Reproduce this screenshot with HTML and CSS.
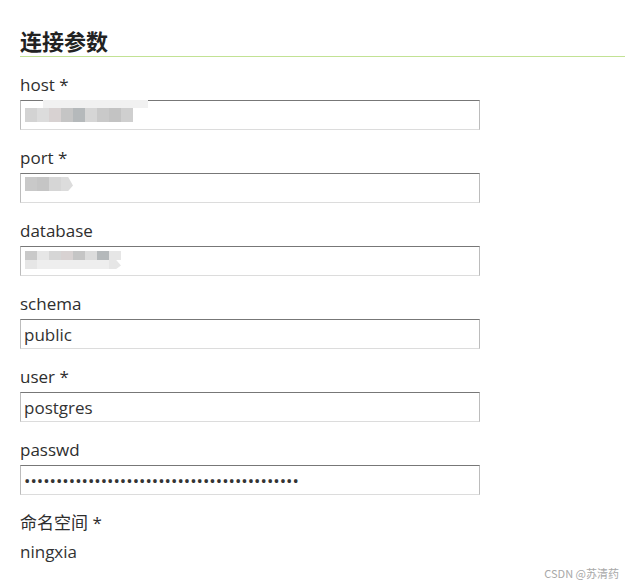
FILE: index.html
```html
<!DOCTYPE html>
<html lang="zh">
<head>
<meta charset="utf-8">
<title>连接参数</title>
<link rel="stylesheet" href="styles.css">
</head>
<body>
<div class="page">
  <h2 class="section-title">连接参数</h2>
  <form class="form">
    <div class="group">
      <label class="label">host *</label>
      <div class="field-wrap">
        <input class="input" type="text" value="">
        <div class="mosaic mosaic-host">
          <div class="mrow light"><span class="w105 c1"></span></div>
          <div class="mrow">
            <span class="c2"></span><span class="c3"></span><span class="c4"></span><span class="c5"></span><span class="c6"></span><span class="c7"></span><span class="c8"></span><span class="c9"></span><span class="c10"></span>
          </div>
        </div>
      </div>
    </div>
    <div class="group">
      <label class="label">port *</label>
      <div class="field-wrap">
        <input class="input" type="text" value="">
        <div class="mosaic mosaic-port">
          <div class="mrow">
            <span class="c8"></span><span class="c5"></span><span class="c7"></span><span class="c3 tail"></span>
          </div>
        </div>
      </div>
    </div>
    <div class="group">
      <label class="label">database</label>
      <div class="field-wrap">
        <input class="input" type="text" value="">
        <div class="mosaic mosaic-db">
          <div class="mrow">
            <span class="c8"></span><span class="c1"></span><span class="c7"></span><span class="c4"></span><span class="c5"></span><span class="c3"></span><span class="c6"></span><span class="c1"></span>
          </div>
          <div class="mrow">
            <span class="c1"></span><span class="c11"></span><span class="c11"></span><span class="c11"></span><span class="c11"></span><span class="c11"></span><span class="c11"></span><span class="c1 tail"></span>
          </div>
        </div>
      </div>
    </div>
    <div class="group">
      <label class="label">schema</label>
      <input class="input" type="text" value="public">
    </div>
    <div class="group">
      <label class="label">user *</label>
      <input class="input" type="text" value="postgres">
    </div>
    <div class="group">
      <label class="label">passwd</label>
      <input class="input" type="password" value="abcdefghijabcdefghijabcdefghijabcdefghijabc">
    </div>
    <div class="group">
      <label class="label">命名空间 *</label>
      <div class="value">ningxia</div>
    </div>
  </form>
</div>
<div class="watermark">CSDN @苏清药</div>
</body>
</html>
```

FILE: styles.css
```css
html, body {
  margin: 0;
  padding: 0;
  background: #ffffff;
}
body {
  font-family: "Open Sans", "Noto Sans CJK SC", sans-serif;
  color: #333333;
  width: 625px;
  height: 585px;
  position: relative;
  overflow: hidden;
}
.page {
  padding: 26px 0 0 20px;
}
.section-title {
  margin: 0 0 17px 0;
  font-family: "Noto Sans CJK SC", "Open Sans", sans-serif;
  font-size: 22px;
  font-weight: 700;
  line-height: 28px;
  padding-bottom: 2px;
  border-bottom: 1px solid #c2e294;
  color: #222222;
}
.form {
  display: flex;
  flex-direction: column;
  gap: 17px;
}
.group {
  display: flex;
  flex-direction: column;
  gap: 4px;
}
.label {
  font-size: 17px;
  line-height: 22px;
  height: 22px;
  color: #2e2e2e;
  font-family: "Open Sans", "Noto Sans CJK SC", sans-serif;
}
.input {
  box-sizing: border-box;
  width: 460px;
  height: 30px;
  margin: 0;
  padding: 0 3px;
  font-family: "Open Sans", sans-serif;
  font-size: 17px;
  color: #333333;
  background: #ffffff;
  border-style: solid;
  border-width: 1px;
  border-color: #777777 #bcbcbc #dcdcdc #bcbcbc;
  outline: none;
}
input[type="password"] {
  font-size: 17px;
}
.value {
  font-size: 17px;
  line-height: 22px;
  margin-top: 3px;
}
.field-wrap {
  position: relative;
  width: 460px;
  height: 30px;
}
.mosaic {
  position: absolute;
  display: flex;
  flex-direction: column;
}
.mrow {
  display: flex;
}
.mrow span {
  display: block;
  width: 12px;
  height: 13px;
}
.mosaic-host {
  left: 5px;
  top: 0;
}
.mosaic-host .mrow.light {
  padding-left: 18px;
}
.mosaic-host .mrow.light span {
  height: 8px;
  width: 105px;
  background: #f1f1f1;
}
.mosaic-host .mrow span {
  height: 14px;
}
.mosaic-port {
  left: 5px;
  top: 4px;
}
.mosaic-port .mrow span {
  height: 14px;
}
.mosaic-db {
  left: 5px;
  top: 5px;
}
.mosaic-db .mrow span {
  height: 9px;
}
.tail {
  clip-path: polygon(0 0, 60% 0, 100% 60%, 60% 100%, 0 100%);
}
.c1 { background: #e6e6e6; }
.c2 { background: #d3d3d3; }
.c3 { background: #dcdcdc; }
.c4 { background: #d8d2d2; }
.c5 { background: #c5c5c5; }
.c6 { background: #b5b9bb; }
.c7 { background: #d6d6d6; }
.c8 { background: #c9c9c9; }
.c9 { background: #c3c3c3; }
.c10 { background: #cfcfcf; }
.c11 { background: #eeeeee; }
.watermark {
  position: absolute;
  right: 6px;
  bottom: 4px;
  font-family: "Noto Sans CJK SC", sans-serif;
  font-size: 11px;
  color: #a8a8a8;
}
```
